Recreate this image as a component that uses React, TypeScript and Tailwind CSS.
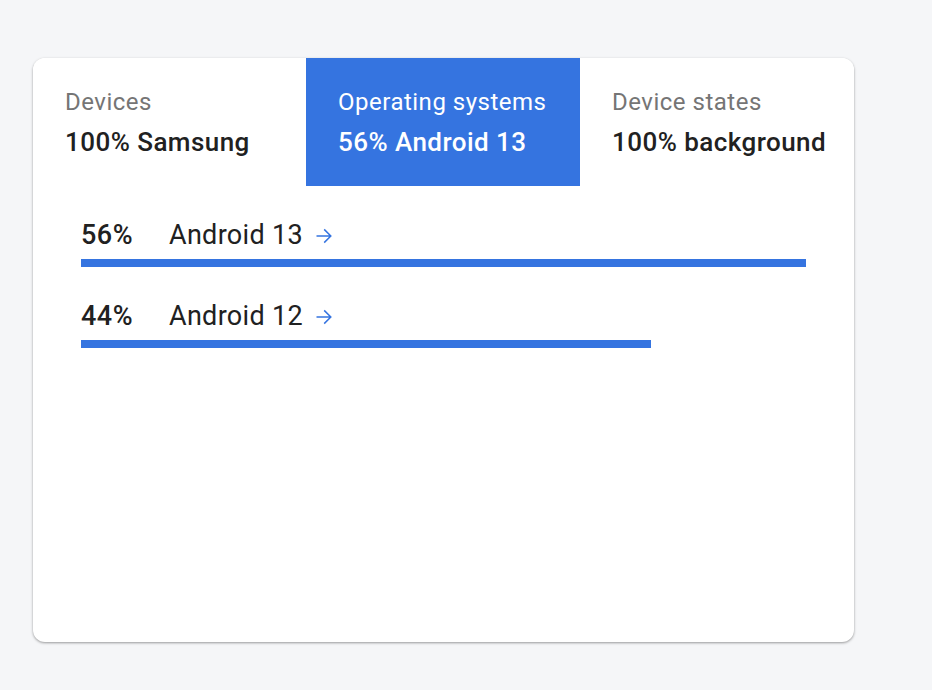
import React from "react";

const tabs = [
  { label: "Devices", value: "100% Samsung", active: false },
  { label: "Operating systems", value: "56% Android 13", active: true },
  { label: "Device states", value: "100% background", active: false },
];

const rows = [
  { pct: 56, name: "Android 13" },
  { pct: 44, name: "Android 12" },
];

function Arrow() {
  return (
    <svg width="16" height="16" viewBox="0 0 16 16" fill="none" className="shrink-0">
      <path
        d="M0.5 8h14.5M8.2 1.4L14.8 8l-6.6 6.6"
        stroke="#3574e0"
        strokeWidth="1.5"
      />
    </svg>
  );
}

export default function App() {
  const max = Math.max(...rows.map((r) => r.pct));
  return (
    <div
      className="w-[932px] h-[690px] bg-[#f5f6f8] pt-[58px] pl-[33px]"
      style={{ fontFamily: "Roboto, 'Noto Sans', sans-serif" }}
    >
      <div className="w-[821px] h-[584px] bg-white rounded-[12px] overflow-hidden shadow-[0_1px_3px_rgba(0,0,0,0.28),0_1px_2px_rgba(0,0,0,0.12)]">
        <div className="grid grid-cols-[273px_274px_274px]">
          {tabs.map((t) => (
            <div
              key={t.label}
              className={`h-[128px] pt-[28px] pl-[32px] flex flex-col gap-[8px] ${t.active ? "bg-[#3574e0]" : "bg-white"}`}
            >
              <div
                className={`text-[24px] leading-[32px] tracking-[0.5px] whitespace-nowrap ${t.active ? "text-white" : "text-[#757575]"}`}
              >
                {t.label}
              </div>
              <div
                className={`text-[26px] leading-[32px] font-medium tracking-[0.45px] whitespace-nowrap ${t.active ? "text-white" : "text-[#212121]"}`}
              >
                {t.value}
              </div>
            </div>
          ))}
        </div>
        <div className="px-[48px] pt-[32px] flex flex-col gap-[32px]">
          {rows.map((r) => (
            <div key={r.name} className="flex flex-col">
              <div className="flex items-center h-[32px] pt-[2px]">
                <div className="w-[88px] text-[27px] leading-[32px] font-medium tracking-[0.5px] text-[#212121]">
                  {r.pct}%
                </div>
                <div className="text-[27px] leading-[32px] text-[#212121] tracking-[0.3px]">
                  {r.name}
                </div>
                <div className="ml-[13px] mt-[1px]">
                  <Arrow />
                </div>
              </div>
              <div className="mt-[9px] h-[8px]">
                <div
                  className="h-[8px] bg-[#3574e0]"
                  style={{ width: `${(r.pct / max) * 100}%` }}
                />
              </div>
            </div>
          ))}
        </div>
      </div>
    </div>
  );
}
